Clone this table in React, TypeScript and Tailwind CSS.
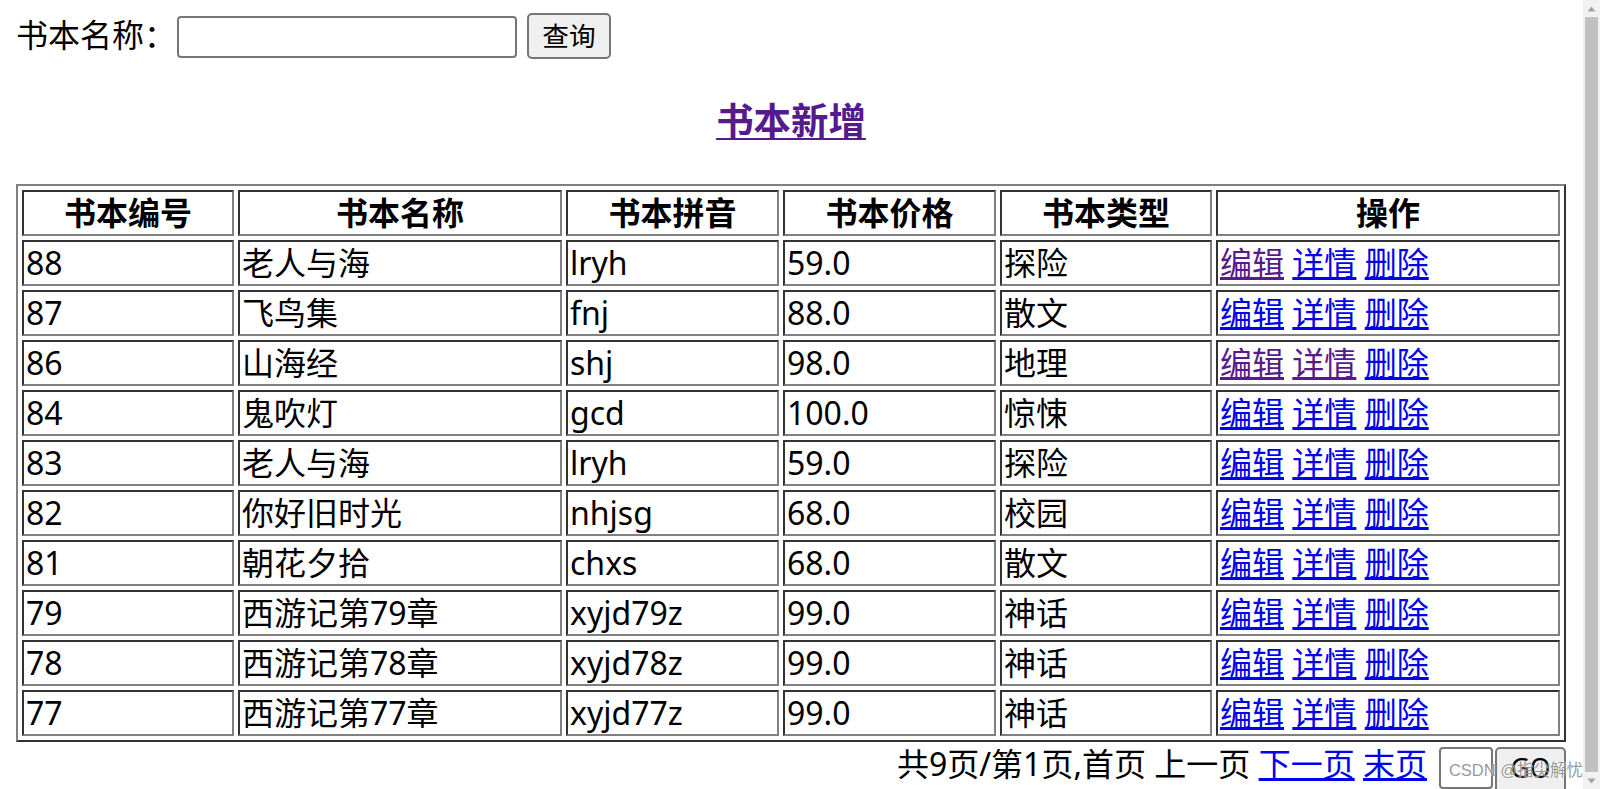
import React from "react";

const rows: string[][] = [
  ["88", "老人与海", "lryh", "59.0", "探险"],
  ["87", "飞鸟集", "fnj", "88.0", "散文"],
  ["86", "山海经", "shj", "98.0", "地理"],
  ["84", "鬼吹灯", "gcd", "100.0", "惊悚"],
  ["83", "老人与海", "lryh", "59.0", "探险"],
  ["82", "你好旧时光", "nhjsg", "68.0", "校园"],
  ["81", "朝花夕拾", "chxs", "68.0", "散文"],
  ["79", "西游记第79章", "xyjd79z", "99.0", "神话"],
  ["78", "西游记第78章", "xyjd78z", "99.0", "神话"],
  ["77", "西游记第77章", "xyjd77z", "99.0", "神话"],
];

const visitedEdit = new Set(["88", "86"]);
const visitedDetail = new Set(["86"]);

const cell =
  "h-[46px] border-2 border-t-[#333333] border-l-[#333333] border-r-[#808080] border-b-[#808080] px-[2px] py-0 align-middle leading-[38px] text-[32px]";

const headers: [string, string][] = [
  ["书本编号", "w-[212px]"],
  ["书本名称", "w-[324px]"],
  ["书本拼音", "w-[213px]"],
  ["书本价格", "w-[213px]"],
  ["书本类型", "w-[212px]"],
  ["操作", "w-[344px]"],
];

export default function App() {
  return (
    <div className="relative flex h-[789px] w-[1600px] overflow-hidden bg-white text-black font-['Noto_Sans','Noto_Sans_CJK_SC',sans-serif]">
      <main className="flex flex-1 flex-col overflow-hidden pl-[16px] pr-[17px]">
        {/* search row */}
        <div className="flex h-[59px] shrink-0 items-start">
          <span className="mt-[12px] text-[32px] leading-[46px]">书本名称：</span>
          <input
            type="text"
            className="ml-[1px] mt-[16px] h-[42px] w-[340px] rounded-[4px] border-2 border-[#767676] bg-white px-[4px] outline-none"
          />
          <button className="ml-[10px] mt-[13px] flex h-[46px] w-[84px] items-center justify-center rounded-[5px] border-2 border-[#767676] bg-[#efefef] text-[26.67px] leading-[34px]">
            查询
          </button>
        </div>

        {/* title */}
        <div className="flex h-[125px] shrink-0 items-center justify-center pb-[1px]">
          <a
            href="#"
            className="text-[37.44px] font-bold leading-[48px] text-[#551a8b] underline decoration-2 underline-offset-[3px]"
          >
            书本新增
          </a>
        </div>

        {/* table */}
        <table className="w-[1550px] shrink-0 table-fixed border-separate border-spacing-[4px] border-2 border-t-[#808080] border-l-[#808080] border-r-[#333333] border-b-[#333333]">
          <thead>
            <tr>
              {headers.map(([h, w]) => (
                <th key={h} className={`${cell} ${w} text-center font-bold`}>
                  {h}
                </th>
              ))}
            </tr>
          </thead>
          <tbody>
            {rows.map((r) => (
              <tr key={r[0]}>
                {r.map((v, i) => (
                  <td key={i} className={`${cell} text-left`}>
                    {v}
                  </td>
                ))}
                <td className={`${cell} text-left whitespace-nowrap`}>
                  <a
                    href="#"
                    className={`underline ${visitedEdit.has(r[0]) ? "text-[#551a8b]" : "text-[#0000ee]"}`}
                  >
                    编辑
                  </a>{" "}
                  <a
                    href="#"
                    className={`underline ${visitedDetail.has(r[0]) ? "text-[#551a8b]" : "text-[#0000ee]"}`}
                  >
                    详情
                  </a>{" "}
                  <a href="#" className="text-[#0000ee] underline">
                    删除
                  </a>
                </td>
              </tr>
            ))}
          </tbody>
        </table>

        {/* pager */}
        <div className="flex shrink-0 items-start justify-end">
          <span className="whitespace-nowrap text-[32px] leading-[44px]">
            共9页/第1页,首页 上一页{" "}
            <a href="#" className="text-[#0000ee] underline">
              下一页
            </a>{" "}
            <a href="#" className="text-[#0000ee] underline">
              末页
            </a>
          </span>
          <input
            type="text"
            className="ml-[12px] mt-[5px] h-[42px] w-[54px] rounded-[4px] border-2 border-[#767676] bg-white outline-none"
          />
          <button className="ml-[2px] mt-[5px] flex h-[46px] w-[71px] items-start justify-center rounded-[5px] border-2 border-[#767676] bg-[#efefef] pt-[2px] text-[26.67px] leading-[34px]">
            GO
          </button>
        </div>
      </main>

      {/* scrollbar */}
      <div className="flex w-[17px] shrink-0 flex-col bg-[#f1f1f1]">
        <div className="flex h-[17px] items-center justify-center">
          <svg width="9" height="6" viewBox="0 0 9 6">
            <path d="M4.5 0.5 L8.5 5.5 L0.5 5.5 Z" fill="#a3a3a3" />
          </svg>
        </div>
        <div className="mx-[2px] flex-1 bg-[#c1c1c1]" />
        <div className="flex h-[17px] items-center justify-center">
          <svg width="9" height="6" viewBox="0 0 9 6">
            <path d="M0.5 0.5 L8.5 0.5 L4.5 5.5 Z" fill="#a3a3a3" />
          </svg>
        </div>
      </div>

      {/* watermark */}
      <div className="pointer-events-none absolute bottom-[9px] right-[17px] whitespace-nowrap font-['Liberation_Sans','Noto_Sans_CJK_SC',sans-serif] text-[16.5px] leading-[20px] text-[#858585]/85 [text-shadow:0_0_2px_#ffffff]">
        CSDN @指尖解忧
      </div>
    </div>
  );
}
